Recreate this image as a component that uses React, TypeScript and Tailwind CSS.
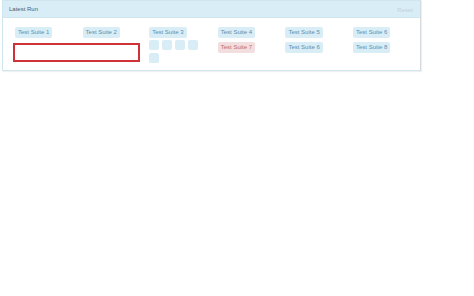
import React from "react";

function Suite({ name, danger = false }: { name: string; danger?: boolean }) {
  return (
    <span
      className={
        (danger ? "bg-[#f2dede] text-[#c46b6b] " : "bg-[#d9edf7] text-[#5b8fae] ") +
        "block h-[11px] px-[3px] rounded-[2px] text-[6px] leading-[11px] whitespace-nowrap"
      }
    >
      {name}
    </span>
  );
}

export default function App() {
  return (
    <div className="w-[474px] h-[296px] bg-white font-['Liberation_Sans',Arial,sans-serif]">
      <div className="ml-[2px] w-[419px] border border-[#cfe6ef] border-r-[#d4dadd] shadow-[1px_1px_1px_rgba(0,0,0,0.06)]">
        <div className="h-[17px] bg-[#d9edf7] flex items-center justify-between pl-[6px] pr-[3px] border-b border-[#cfe6ef]">
          <span className="text-[6px] leading-none text-[#4d5d68]">Latest Run</span>
          <span className="h-[11px] px-[3px] text-[6px] leading-[11px] text-[#c3d2d9] border border-[#d9edf7]">Reset</span>
        </div>
        <div className="pl-[12px] pt-[9px] pb-[7px] grid grid-cols-[67.6px_67.6px_67.6px_67.6px_67.6px_67.6px] gap-y-[2px] leading-none">
          <div className="flex"><Suite name="Test Suite 1" /></div>
          <div className="flex"><Suite name="Test Suite 2" /></div>
          <div className="flex -ml-[1px]"><Suite name="Test Suite 3" /></div>
          <div className="flex"><Suite name="Test Suite 4" /></div>
          <div className="flex"><Suite name="Test Suite 5" /></div>
          <div className="flex"><Suite name="Test Suite 6" /></div>

          <div className="col-span-2 -ml-[2px] mt-[3px]">
            <div className="w-[127px] h-[19px] border-2 border-[#d0323a]" />
          </div>
          <div className="-ml-[1px] flex flex-wrap gap-[3px] w-[52px] self-start">
            <div className="w-[10px] h-[10px] rounded-[2px] bg-[#d9edf7]" />
            <div className="w-[10px] h-[10px] rounded-[2px] bg-[#d9edf7]" />
            <div className="w-[10px] h-[10px] rounded-[2px] bg-[#d9edf7]" />
            <div className="w-[10px] h-[10px] rounded-[2px] bg-[#d9edf7]" />
            <div className="w-[10px] h-[10px] rounded-[2px] bg-[#d9edf7]" />
          </div>
          <div className="flex mt-[2px] self-start"><Suite name="Test Suite 7" danger /></div>
          <div className="flex mt-[2px] self-start"><Suite name="Test Suite 6" /></div>
          <div className="flex mt-[2px] self-start"><Suite name="Test Suite 8" /></div>
        </div>
      </div>
    </div>
  );
}
